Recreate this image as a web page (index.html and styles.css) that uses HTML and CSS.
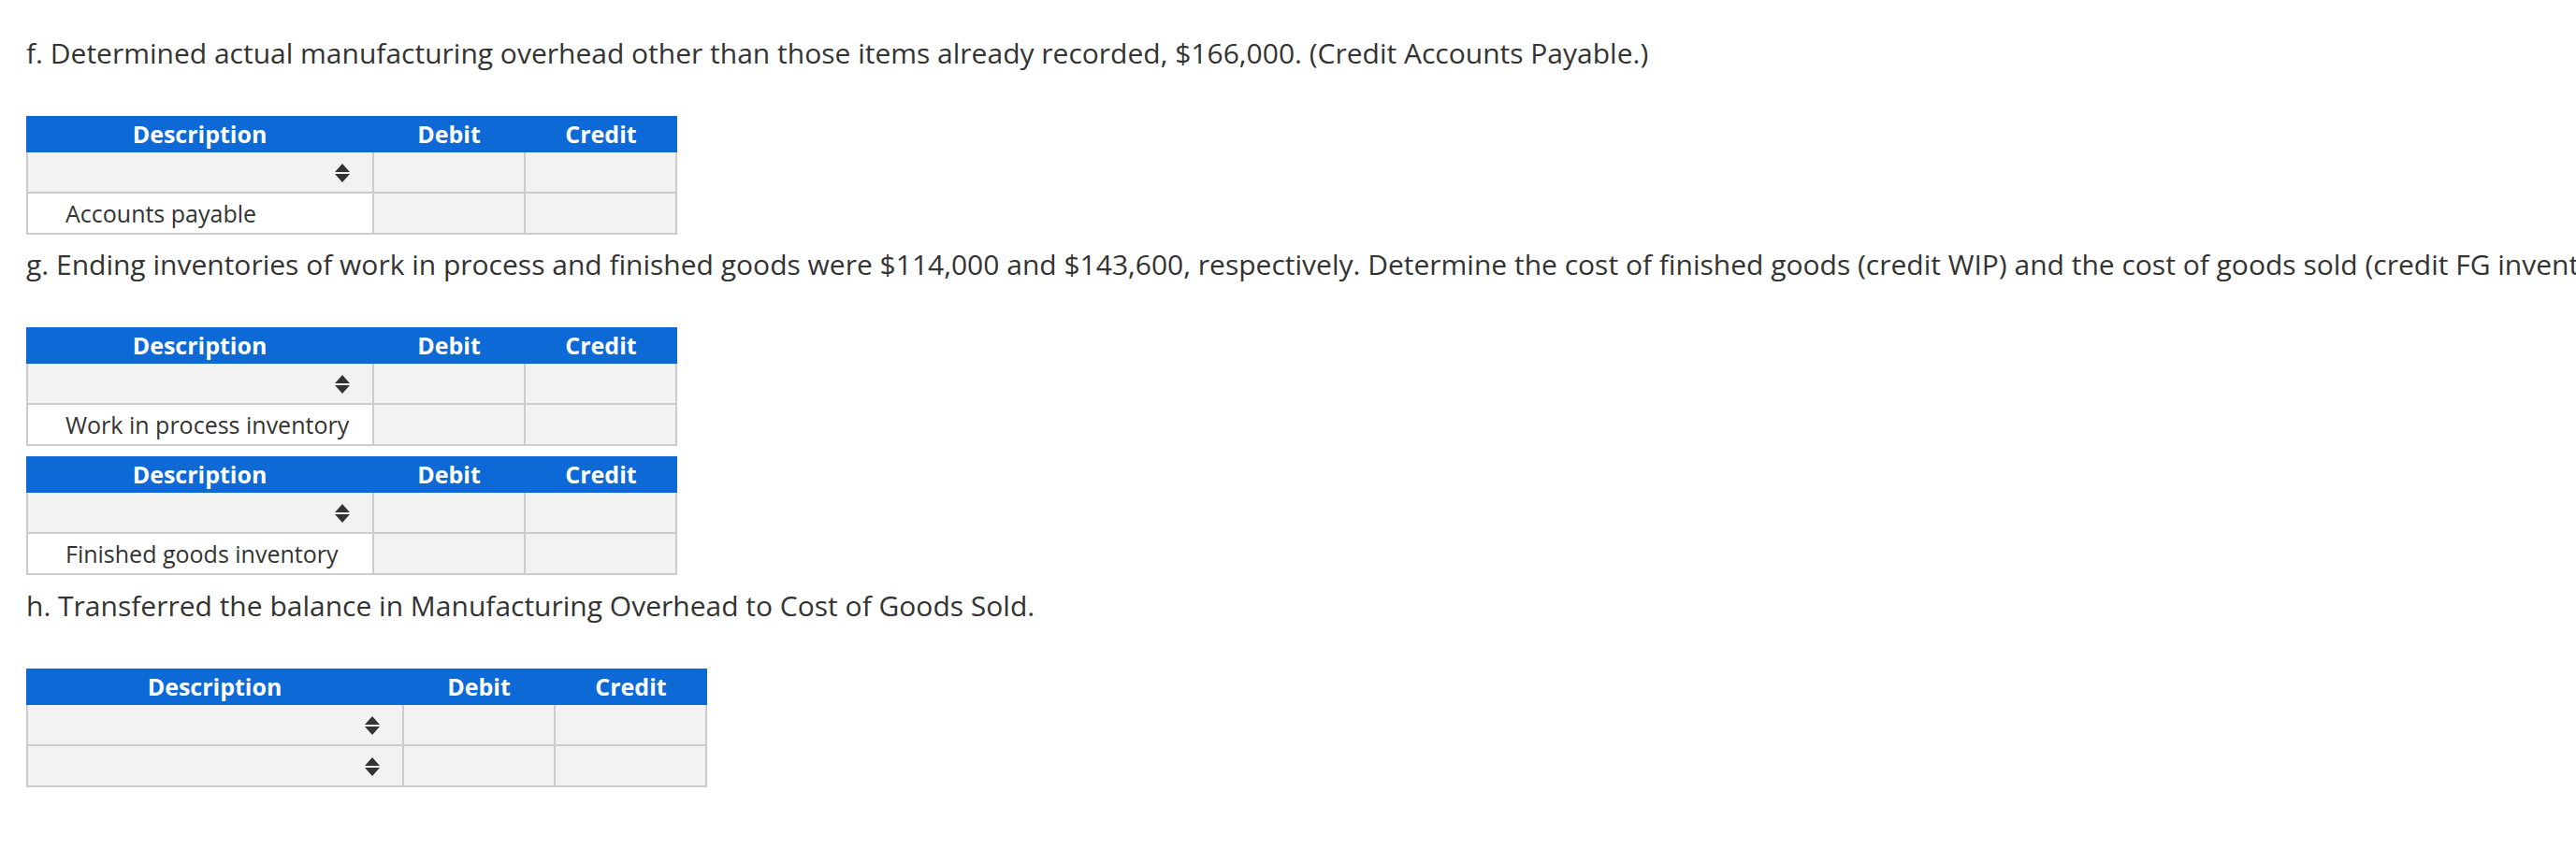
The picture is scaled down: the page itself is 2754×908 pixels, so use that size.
FILE: index.html
```html
<!DOCTYPE html>
<html lang="en">
<head>
<meta charset="utf-8">
<title>Journal entries</title>
<link rel="stylesheet" href="styles.css">
</head>
<body>
<main class="page">
  <p class="q q-f">f. Determined actual manufacturing overhead other than those items already recorded, $166,000. (Credit Accounts Payable.)</p>
  <div class="journal narrow gap-s">
    <div class="jh"><span>Description</span><span>Debit</span><span>Credit</span></div>
    <div class="jb">
      <div class="cell sel"><svg class="arrows" width="16" height="20" viewBox="0 0 16 20"><path d="M0 9 L8 0 L16 9 Z M0 11 L16 11 L8 20 Z"/></svg></div>
      <div class="cell num"></div><div class="cell num"></div>
      <div class="cell acct">Accounts payable</div>
      <div class="cell num"></div><div class="cell num"></div>
    </div>
  </div>
  <p class="q">g. Ending inventories of work in process and finished goods were $114,000 and $143,600, respectively. Determine the cost of finished goods (credit WIP) and the cost of goods sold (credit FG inventory).</p>
  <div class="journal narrow gap-s">
    <div class="jh"><span>Description</span><span>Debit</span><span>Credit</span></div>
    <div class="jb">
      <div class="cell sel"><svg class="arrows" width="16" height="20" viewBox="0 0 16 20"><path d="M0 9 L8 0 L16 9 Z M0 11 L16 11 L8 20 Z"/></svg></div>
      <div class="cell num"></div><div class="cell num"></div>
      <div class="cell acct">Work in process inventory</div>
      <div class="cell num"></div><div class="cell num"></div>
    </div>
  </div>
  <div class="journal narrow gap-m">
    <div class="jh"><span>Description</span><span>Debit</span><span>Credit</span></div>
    <div class="jb">
      <div class="cell sel"><svg class="arrows" width="16" height="20" viewBox="0 0 16 20"><path d="M0 9 L8 0 L16 9 Z M0 11 L16 11 L8 20 Z"/></svg></div>
      <div class="cell num"></div><div class="cell num"></div>
      <div class="cell acct">Finished goods inventory</div>
      <div class="cell num"></div><div class="cell num"></div>
    </div>
  </div>
  <p class="q">h. Transferred the balance in Manufacturing Overhead to Cost of Goods Sold.</p>
  <div class="journal wide">
    <div class="jh"><span>Description</span><span>Debit</span><span>Credit</span></div>
    <div class="jb">
      <div class="cell sel"><svg class="arrows" width="16" height="20" viewBox="0 0 16 20"><path d="M0 9 L8 0 L16 9 Z M0 11 L16 11 L8 20 Z"/></svg></div>
      <div class="cell num"></div><div class="cell num"></div>
      <div class="cell sel"><svg class="arrows" width="16" height="20" viewBox="0 0 16 20"><path d="M0 9 L8 0 L16 9 Z M0 11 L16 11 L8 20 Z"/></svg></div>
      <div class="cell num"></div><div class="cell num"></div>
    </div>
  </div>
</main>
</body>
</html>
```

FILE: styles.css
```css
html, body {
  margin: 0;
  padding: 0;
  background: #ffffff;
  overflow: hidden;
}

body {
  font-family: "Open Sans", "Liberation Sans", sans-serif;
  color: #333333;
}

.page {
  padding: 36px 28px 0 28px;
}

.q {
  margin: 0 0 46px 0;
  font-size: 30px;
  line-height: 42px;
  white-space: nowrap;
}

.journal {
  width: fit-content;
}

.journal.gap-s { margin-bottom: 11px; }
.journal.gap-m { margin-bottom: 12px; }

.jh {
  display: grid;
  background: #0c69d6;
  color: #ffffff;
  font-weight: 700;
  font-size: 25px;
  line-height: 39px;
  height: 39px;
  text-align: center;
}

.jb {
  display: grid;
  gap: 2px;
  padding: 0 2px 2px 2px;
  background: #cccccc;
  grid-auto-rows: 42px;
}

.narrow .jh { grid-template-columns: 371px 162px 163px; }
.narrow .jb { grid-template-columns: 368px 160px 160px; }
.wide .jh { grid-template-columns: 403px 162px 163px; }
.wide .jb { grid-template-columns: 400px 160px 160px; }

.cell {
  background: #f2f2f2;
}

.cell.acct {
  background: #ffffff;
  font-size: 25px;
  line-height: 42px;
  padding-left: 40px;
  white-space: nowrap;
}

.cell.sel {
  display: flex;
  align-items: center;
  justify-content: flex-end;
  padding-right: 24px;
  padding-top: 2px;
}

.arrows {
  display: block;
  fill: #333333;
}
```
